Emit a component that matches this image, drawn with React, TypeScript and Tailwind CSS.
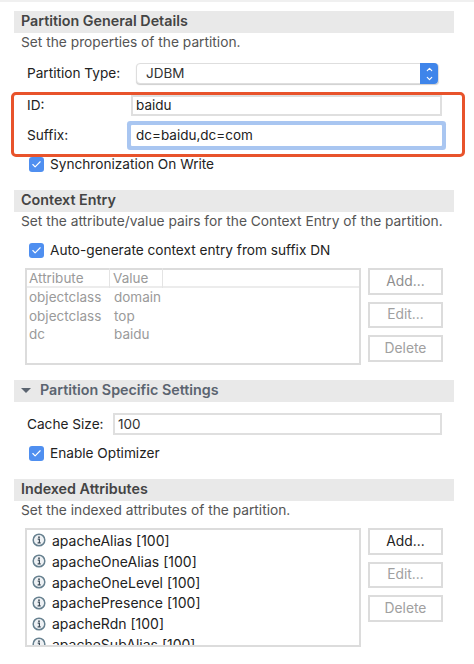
import { Check, ChevronDown, ChevronUp } from "lucide-react";

const font = "font-['Inter','Liberation_Sans',sans-serif]";

function SectionHeader({ title, arrow, className = "" }: { title: string; arrow?: boolean; className?: string }) {
  return (
    <div className={`flex h-[22px] w-[440px] items-center bg-[#e9e9e9] pb-[2px] pl-[7px] text-[14.3px] font-semibold ${arrow ? "text-[#5b6470]" : "text-[#444444]"} ${className}`}>
      {arrow && <span className="mr-[9px] h-0 w-0 border-x-[5px] border-t-[5px] border-x-transparent border-t-[#5b6470]" />}
      {title}
    </div>
  );
}

function Checkbox({ label, className = "" }: { label: string; className?: string }) {
  return (
    <div className={`flex items-center ${className}`}>
      <span className="ml-[15px] flex h-[15px] w-[15px] items-center justify-center rounded-[3px] bg-[#4f8ff0]">
        <Check size={11} strokeWidth={2.5} className="text-white" />
      </span>
      <span className="ml-[6px] text-[13.65px] text-[#222222]">{label}</span>
    </div>
  );
}

function SideButtons({ first }: { first?: boolean }) {
  const cls = "flex items-center justify-center border-2 border-[#dcdcdc] bg-white text-[13.8px]";
  return (
    <div className="ml-[7px] flex w-[75px] flex-col">
      <button className={`${cls} h-[26.5px] ${first ? "text-[#222222]" : "text-[#8e8e8e]"}`}>Add...</button>
      <button className={`${cls} mt-[7px] h-[26.5px] text-[#a0a0a0]`}>Edit...</button>
      <button className={`${cls} mt-[7px] h-[26.5px] text-[#a0a0a0]`}>Delete</button>
    </div>
  );
}

function InfoIcon() {
  return (
    <svg width="14" height="14" viewBox="0 0 14 14" className="shrink-0">
      <circle cx="7" cy="7" r="5.8" fill="#eef1f4" stroke="#66808f" strokeWidth="1.5" />
      <circle cx="7" cy="4.2" r="0.9" fill="#3f4e5a" />
      <path d="M5.7 6.2H7.4V9.6M5.6 9.9H8.7" fill="none" stroke="#3f4e5a" strokeWidth="1.2" />
    </svg>
  );
}

const contextRows = [
  ["objectclass", "domain"],
  ["objectclass", "top"],
  ["dc", "baidu"],
];

const indexed = ["apacheAlias", "apacheOneAlias", "apacheOneLevel", "apachePresence", "apacheRdn", "apacheSubAlias"];

export default function App() {
  return (
    <div className={`relative h-[664px] w-[474px] overflow-hidden bg-white ${font}`}>
      <div className="h-[2px] bg-[#f0f0f0]" />
      <div className="pt-[9px] pl-[14px]">
        {/* General details */}
        <SectionHeader title="Partition General Details" />
        <p className="pl-[7px] text-[13.75px] leading-[18px] text-[#555555]">Set the properties of the partition.</p>

        <div className="mt-[12px] flex h-[21px] items-center">
          <span className="ml-[13px] w-[109px] text-[13.65px] text-[#222222]">Partition Type:</span>
          <div className="flex h-[21px] w-[303px] items-center justify-between rounded-[4px] border border-[#dedede] bg-white pl-[9px] text-[13.5px] text-[#333333] shadow-[0_1px_1px_#cfcfcf]">
            JDBM
            <span className="flex h-[21px] w-[18px] flex-col items-center justify-center rounded-r-[4px] bg-[#3f85ea] text-white">
              <ChevronUp size={9} strokeWidth={3} />
              <ChevronDown size={9} strokeWidth={3} />
            </span>
          </div>
        </div>

        <div className="mt-[11px] flex h-[21px] items-start">
          <span className="mt-[1px] ml-[13px] w-[104px] text-[13.65px] leading-[18px] text-[#222222]">ID:</span>
          <div className="flex h-[21px] w-[311px] items-center border-2 border-[#dfdfdf] pl-[3px] text-[13.5px] text-[#222222]">baidu</div>
        </div>
        <div className="mt-[9px] flex h-[21px] items-start">
          <span className="mt-[1px] ml-[13px] w-[104px] text-[13.65px] leading-[18px] text-[#222222]">Suffix:</span>
          <div className="flex h-[21px] w-[311px] items-center rounded-[1px] pl-[5px] text-[13.5px] text-[#222222] shadow-[0_0_0_4px_#a9c6f1]">dc=baidu,dc=com</div>
        </div>

        <Checkbox label="Synchronization On Write" className="mt-[10px] h-[16px]" />

        {/* Context entry */}
        <SectionHeader title="Context Entry" className="mt-[18px]" />
        <p className="pl-[7px] text-[13.75px] leading-[18px] text-[#555555]">Set the attribute/value pairs for the Context Entry of the partition.</p>
        <Checkbox label="Auto-generate context entry from suffix DN" className="mt-[12px] h-[16px]" />

        <div className="mt-[10px] flex">
          <div className="ml-[11px] h-[97px] w-[336px] border-2 border-[#dcdcdc] text-[13.5px] text-[#9a9a9a]">
            <div className="flex h-[18px] items-center border-b-2 border-[#ececec]">
              <span className="ml-[2px] w-[81px] border-r border-[#e4e4e4]">Attribute</span>
              <span className="w-[53px] border-r border-[#e4e4e4] pl-[3px]">Value</span>
            </div>
            {contextRows.map(([a, v], i) => (
              <div key={i} className="flex h-[18.5px] items-center first:mt-[1px]">
                <span className="ml-[2px] w-[82px]">{a}</span>
                <span className="pl-[3px]">{v}</span>
              </div>
            ))}
          </div>
          <SideButtons />
        </div>

        {/* Specific settings */}
        <SectionHeader title="Partition Specific Settings" arrow className="mt-[15px]" />
        <div className="mt-[11px] flex h-[22px] items-center">
          <span className="ml-[13px] w-[86px] text-[13.65px] text-[#222222]">Cache Size:</span>
          <div className="flex h-[22px] w-[329px] items-center border-2 border-[#dfdfdf] pl-[3px] text-[13.5px] text-[#333333]">100</div>
        </div>
        <Checkbox label="Enable Optimizer" className="mt-[10px] h-[16px]" />

        {/* Indexed attributes */}
        <SectionHeader title="Indexed Attributes" className="mt-[18px]" />
        <p className="pl-[7px] text-[13.75px] leading-[18px] text-[#555555]">Set the indexed attributes of the partition.</p>

        <div className="mt-[9px] flex">
          <div className="ml-[11px] h-[119px] w-[336px] overflow-hidden border-2 border-[#dcdcdc] text-[14px] text-[#222222]">
            {indexed.map((name) => (
              <div key={name} className="flex h-[20.8px] items-center pl-[5px]">
                <InfoIcon />
                <span className="ml-[6px]">{name} [100]</span>
              </div>
            ))}
          </div>
          <SideButtons first />
        </div>
      </div>

      {/* red annotation box drawn over the form */}
      <div className="absolute top-[92px] left-[11px] h-[65px] w-[454px] rounded-[5px] border-[3px] border-[#e8532b]" />
    </div>
  );
}
